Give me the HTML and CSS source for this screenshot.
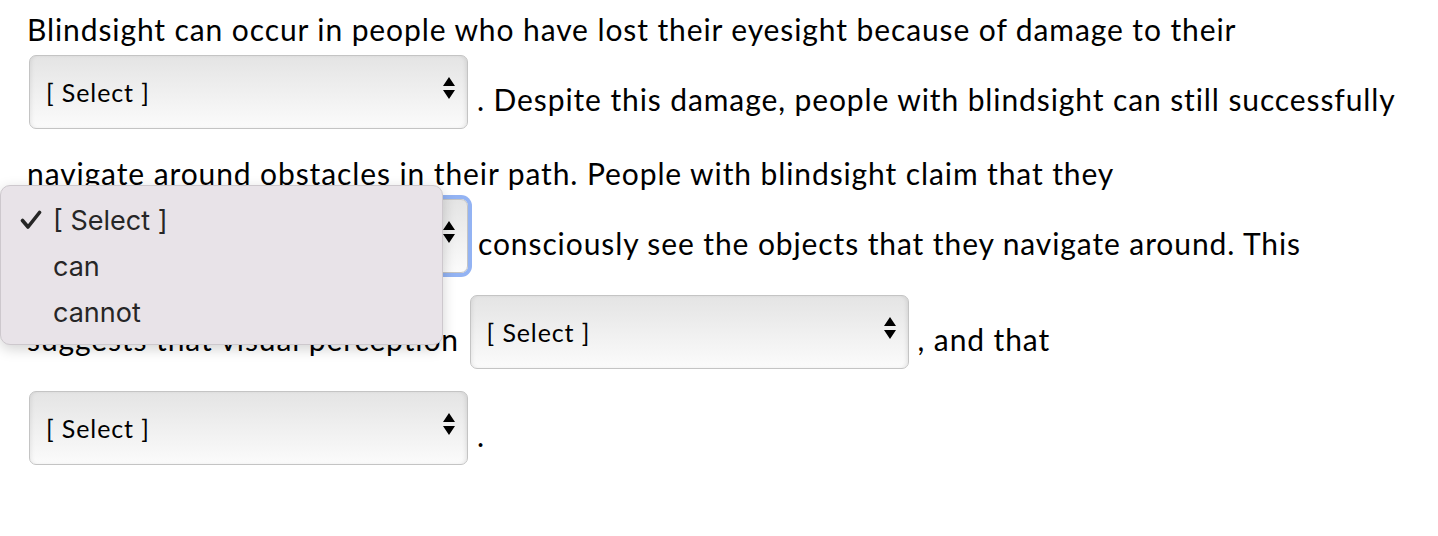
FILE: index.html
```html
<!DOCTYPE html>
<html lang="en">
  <head>
    <meta charset="UTF-8" />
    <meta name="viewport" content="width=device-width, initial-scale=1.0" />
    <title>Blindsight</title>
    <link rel="stylesheet" href="styles.css">
  </head>
  <body>
    <div class="question">
      <p class="questionText">
        Blindsight can occur in people who have lost their eyesight because of damage to their
        <span class="select"><span class="selectInner"><span class="selectLabel">[ Select ]</span><svg class="arrows" width="12" height="22" viewBox="0 0 12 22"><path d="M6 0 L12 9 L0 9 Z M0 13 L12 13 L6 22 Z" fill="#000"/></svg></span></span>. Despite this damage, people with blindsight can still successfully navigate around obstacles in their path. People with blindsight claim that they
        <span class="select focused"><span class="selectInner"><span class="selectLabel">[ Select ]</span><svg class="arrows" width="12" height="22" viewBox="0 0 12 22"><path d="M6 0 L12 9 L0 9 Z M0 13 L12 13 L6 22 Z" fill="#000"/></svg></span></span><span class="after">consciously</span> see the objects that they navigate around. This suggests that visual perception
        <span class="select"><span class="selectInner"><span class="selectLabel">[ Select ]</span><svg class="arrows" width="12" height="22" viewBox="0 0 12 22"><path d="M6 0 L12 9 L0 9 Z M0 13 L12 13 L6 22 Z" fill="#000"/></svg></span></span>, and that
        <span class="select"><span class="selectInner"><span class="selectLabel">[ Select ]</span><svg class="arrows" width="12" height="22" viewBox="0 0 12 22"><path d="M6 0 L12 9 L0 9 Z M0 13 L12 13 L6 22 Z" fill="#000"/></svg></span></span>.
      </p>

      <!-- open dropdown of the second select -->
      <ul class="menu">
        <li class="menuItem checked">
          <svg class="check" width="22" height="20" viewBox="0 0 22 20"><path d="M2.5 10.5 L8 17 L19.5 2.5" fill="none" stroke="#262626" stroke-width="3.6" stroke-linecap="round" stroke-linejoin="round"/></svg>
          [ Select ]
        </li>
        <li class="menuItem">can</li>
        <li class="menuItem">cannot</li>
      </ul>
    </div>
  </body>
</html>
```

FILE: styles.css
```css
/* Reset some default styles */
body,
p,
ul {
  margin: 0;
  padding: 0;
}

body {
  font-family: Lato, "Liberation Sans", sans-serif;
  background-color: #fff;
  color: #000;
}

.question {
  position: relative;
  padding: 5px 38px 0 27px;
}

.questionText {
  font-size: 30px;
  letter-spacing: 0.9px;
  line-height: 48px;
}

/* Fake select boxes */
.select {
  display: inline-block;
  box-sizing: border-box;
  width: 439px;
  height: 74px;
  margin: 2px 9px 20px 2px;
  overflow: hidden;
  vertical-align: -38px;
  line-height: 1;
  font-size: 25px;
  letter-spacing: 0.9px;
  border: 1px solid #c4c4c4;
  border-radius: 7px;
  background: linear-gradient(#e4e4e4, #fbfbfb);
  box-shadow: inset 3px 0 4px -2px rgba(0, 0, 0, 0.08),
    inset -3px 0 4px -2px rgba(0, 0, 0, 0.1);
}

.selectInner {
  display: flex;
  align-items: center;
  justify-content: space-between;
  height: 100%;
  padding: 0 12px 0 16px;
}

.arrows {
  margin-top: -8px;
}

.select.focused {
  box-shadow: 0 0 0 4px #93b3f3;
}

.after {
  margin-left: 1px;
}

/* Dropdown menu */
.menu {
  position: absolute;
  left: 0;
  top: 185px;
  width: 443px;
  height: 160px;
  box-sizing: border-box;
  padding-top: 12px;
  list-style: none;
  font-family: Inter, "Noto Sans", sans-serif;
  font-size: 27px;
  color: #262626;
  background-color: #e8e3e8;
  border: 1px solid #cdc8cd;
  border-radius: 10px;
  box-shadow: 0 4px 14px rgba(0, 0, 0, 0.18);
}

.menuItem {
  position: relative;
  height: 46px;
  line-height: 46px;
  padding-left: 52px;
}

.check {
  position: absolute;
  left: 19px;
  top: 12px;
}
```
